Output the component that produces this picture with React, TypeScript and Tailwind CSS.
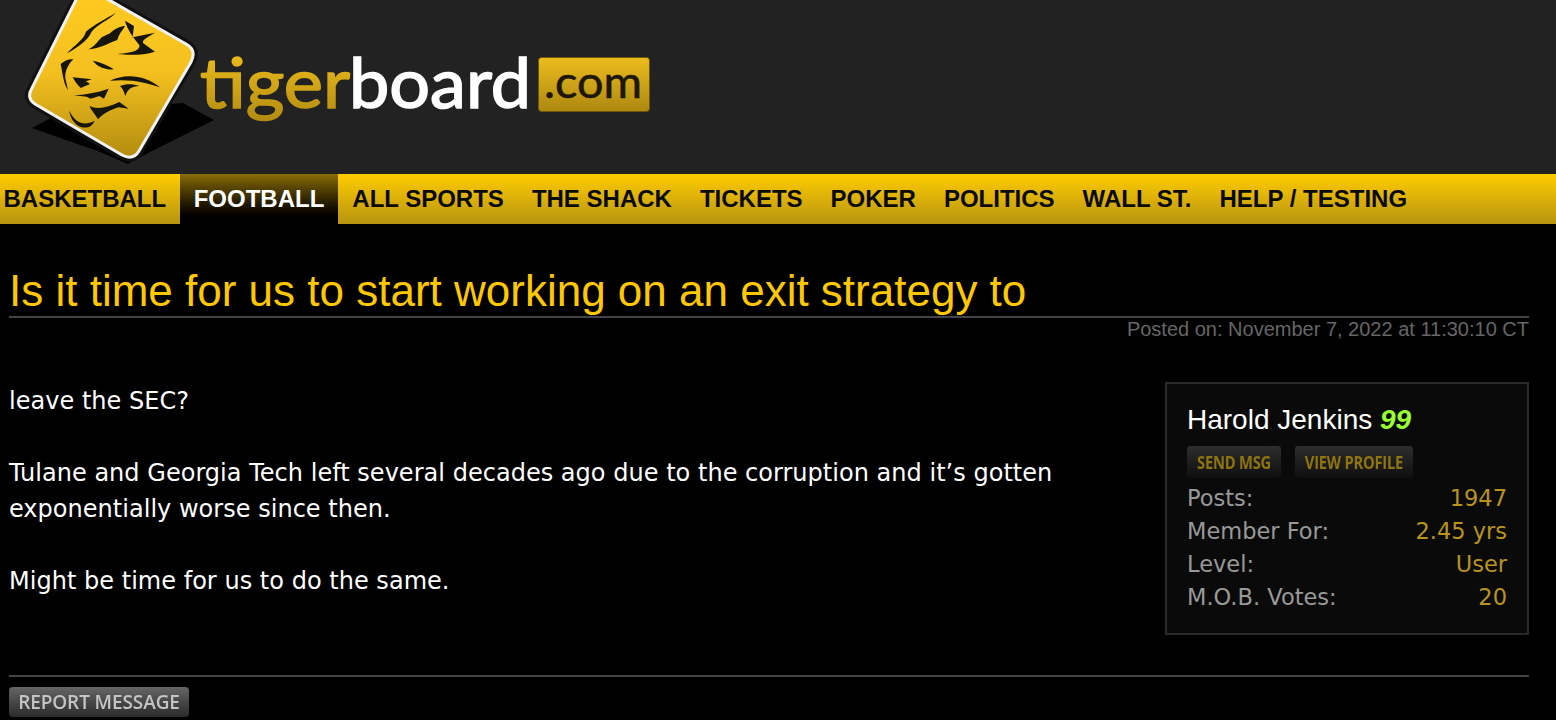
const navItems = ["BASKETBALL", "FOOTBALL", "ALL SPORTS", "THE SHACK", "TICKETS", "POKER", "POLITICS", "WALL ST.", "HELP / TESTING"];

const stats = [
  { label: "Posts:", value: "1947" },
  { label: "Member For:", value: "2.45 yrs" },
  { label: "Level:", value: "User" },
  { label: "M.O.B. Votes:", value: "20" },
];

const cardShape = "M88 -12 L186 44 Q197 50 191 62 L139 151 Q133 161 122 155 L35 104 Q26 98 32 88 L80 -8 Q84 -14 88 -12 Z";

const Logo = () => (
  <svg width="680" height="174" viewBox="0 0 680 174" className="block">
    <defs>
      <linearGradient id="card" x1="0" y1="0" x2="0" y2="1">
        <stop offset="0" stopColor="#ffcb20" />
        <stop offset="0.5" stopColor="#f4c020" />
        <stop offset="1" stopColor="#b38d10" />
      </linearGradient>
      <linearGradient id="gold" x1="0" y1="0" x2="0" y2="1">
        <stop offset="0" stopColor="#f7c51c" />
        <stop offset="1" stopColor="#b08a12" />
      </linearGradient>
      <linearGradient id="com" x1="0" y1="0" x2="0" y2="1">
        <stop offset="0" stopColor="#ecbc1e" />
        <stop offset="1" stopColor="#ad8811" />
      </linearGradient>
      <filter id="soft">
        <feGaussianBlur stdDeviation="0.6" />
      </filter>
    </defs>
    <path d="M32 128 L62 112 L183 103 L214 120 L150 152 L128 164 L100 152 Z" fill="#050505" filter="url(#soft)" />
    <path d={cardShape} fill="#111111" stroke="#111111" strokeWidth="9" strokeLinejoin="round" />
    <path d={cardShape} fill="url(#card)" stroke="#f2f2f2" strokeWidth="3" />
    <g transform="translate(10 0) scale(0.3333)" fill="#17130a" filter="url(#soft)">
      <path d="M170 160 C195 135 222 118 228 95 C250 75 285 58 318 38 C295 62 262 72 245 95 C235 120 200 145 170 160 Z" />
      <path d="M235 148 C255 140 262 125 275 112 L300 100 C315 85 335 78 345 78 C335 95 328 100 322 120 C295 130 262 148 235 148 Z" />
      <path d="M345 62 L372 78 L368 112 L435 98 C405 115 395 122 400 130 L435 155 C395 168 350 165 322 162 C370 158 392 150 388 135 C372 115 352 90 345 62 Z" />
      <path d="M152 192 C165 182 176 176 190 178 C176 192 164 212 166 235 L174 270 C160 250 158 220 152 192 Z" />
      <path d="M248 182 C270 186 292 196 312 208 C290 210 264 202 248 182 Z" />
      <path d="M300 242 C345 220 405 224 450 262 C410 248 365 236 300 242 Z" />
      <path d="M330 258 C350 250 370 252 388 258 C365 258 352 268 346 288 C342 275 338 265 330 258 Z" />
      <path d="M188 232 L245 238 L228 244 L240 252 L212 264 L198 248 Z" />
      <path d="M192 286 C225 284 262 278 296 266 L282 296 L268 288 L242 296 L230 290 Z" />
      <path d="M238 318 C262 330 295 322 328 306 L356 326 L326 322 C300 330 278 342 264 358 C258 345 246 335 238 318 Z" />
      <path d="M178 332 C195 368 222 380 254 362 C246 382 226 388 206 378 C190 368 180 350 178 332 Z" />
    </g>
    <text
      x="200"
      y="108"
      fontFamily="Lato, sans-serif"
      fontSize="69"
      fontWeight="400"
      fill="url(#gold)"
      stroke="url(#gold)"
      strokeWidth="1.6"
      textLength="150"
      lengthAdjust="spacingAndGlyphs"
    >
      tiger
    </text>
    <text
      x="349"
      y="108"
      fontFamily="Lato, sans-serif"
      fontSize="69"
      fontWeight="400"
      fill="#ffffff"
      stroke="#ffffff"
      strokeWidth="1.6"
      textLength="182"
      lengthAdjust="spacingAndGlyphs"
    >
      board
    </text>
    <rect x="538.5" y="57.5" width="111" height="54" rx="3" fill="url(#com)" stroke="#6e5608" />
    <text
      x="544"
      y="98"
      fontFamily="Lato, sans-serif"
      fontSize="45"
      fill="#1d1704"
      stroke="#1d1704"
      strokeWidth="0.6"
      textLength="98"
      lengthAdjust="spacingAndGlyphs"
    >
      .com
    </text>
  </svg>
);

const App = () => {
  return (
    <div className="h-[720px] overflow-hidden bg-black font-['Liberation_Sans',Arial,sans-serif]">
      <header className="h-[174px] overflow-hidden bg-[#222222]">
        <Logo />
      </header>
      <nav className="flex h-[50px] bg-gradient-to-b from-[#ffcc00] to-[#b8940f] pl-[3.5px]">
        {navItems.map((item) => (
          <a
            key={item}
            className={
              item === "FOOTBALL"
                ? "flex items-center bg-gradient-to-b from-[#8a6d0a] to-black px-[14px] text-[24px] font-bold text-white"
                : "flex items-center px-[14px] text-[24px] font-bold text-[#0a0a0a] first:pl-0 first:pr-[13.5px]"
            }
          >
            {item}
          </a>
        ))}
      </nav>
      <main className="pr-[27px] pl-[9px]">
        <h1 className="mt-[43px] h-[51px] border-b-2 border-[#444444] text-[44px] leading-[48px] font-normal text-[#ffc800]">
          Is it time for us to start working on an exit strategy to
        </h1>
        <p className="text-right text-[20px] leading-[22px] text-[#666666]">
          Posted on: November 7, 2022 at 11:30:10 CT
        </p>
        <div className="mt-[43px] flex justify-between">
          <div className="w-[1060px] font-['DejaVu_Sans',Verdana,sans-serif] text-[24px] leading-[36px] tracking-[0.025px] text-white">
            <p>leave the SEC?</p>
            <p className="mt-[36px]">
              Tulane and Georgia Tech left several decades ago due to the corruption and it’s gotten exponentially worse since then.
            </p>
            <p className="mt-[36px]">Might be time for us to do the same.</p>
          </div>
          <aside className="mt-[-1px] h-[253px] w-[364px] border-2 border-[#2a2a2a] bg-[#0a0a0a] px-[20px] pt-[18px]">
            <div className="text-[28px] leading-[36px] text-white">
              Harold Jenkins <span className="font-bold text-[#99ff33] italic">99</span>
            </div>
            <div className="mt-[8px] flex gap-[14px]">
              <span className="flex h-[32px] w-[94px] items-center justify-center rounded-[3px] bg-gradient-to-b from-[#2e2e2e] to-[#0f0f0f] font-['Open_Sans',sans-serif] text-[18px] font-bold whitespace-nowrap text-[#8f7510] blur-[0.5px]">
                <span className="scale-x-[0.82] tracking-[-0.3px]">SEND MSG</span>
              </span>
              <span className="flex h-[32px] w-[118px] items-center justify-center rounded-[3px] bg-gradient-to-b from-[#2e2e2e] to-[#0f0f0f] font-['Open_Sans',sans-serif] text-[18px] font-bold whitespace-nowrap text-[#8f7510] blur-[0.5px]">
                <span className="scale-x-[0.82] tracking-[-0.3px]">VIEW PROFILE</span>
              </span>
            </div>
            <dl className="mt-[4px] font-['DejaVu_Sans',Verdana,sans-serif] text-[22.5px] leading-[33px]">
              {stats.map((stat) => (
                <div key={stat.label} className="flex justify-between">
                  <dt className="text-[#999999]">{stat.label}</dt>
                  <dd className="text-[#b8931f]">{stat.value}</dd>
                </div>
              ))}
            </dl>
          </aside>
        </div>
        <div className="mt-[40px] border-t-2 border-[#444444] pt-[10px]">
          <button className="flex h-[30px] w-[180px] items-center justify-center rounded-[4px] bg-gradient-to-b from-[#666666] to-[#2b2b2b] font-['Open_Sans',sans-serif] text-[19px] font-semibold tracking-[-0.1px] text-[#c4c4c4] blur-[0.6px]">
            REPORT MESSAGE
          </button>
        </div>
      </main>
    </div>
  );
};

export default App;
